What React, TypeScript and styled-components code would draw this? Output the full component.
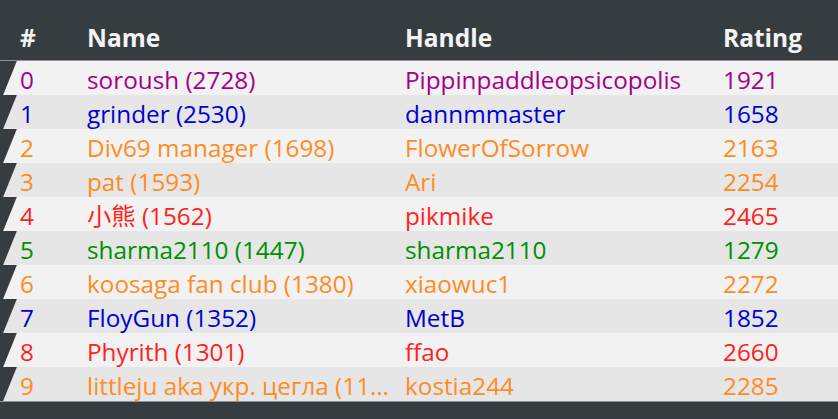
import React, { ReactElement } from "react";
import styled, { createGlobalStyle } from "styled-components";

const GlobalStyle = createGlobalStyle`
  html, body {
    margin: 0;
    padding: 0;
    background: #363d40;
  }
  body {
    font-family: "Open Sans", "Noto Sans", "Noto Sans CJK SC", sans-serif;
  }
`;

const colors: Record<string, string> = {
  purple: "#a3008a",
  blue: "#0000d0",
  orange: "#ff8c1f",
  red: "#ff1f1f",
  green: "#008f00",
};

interface Entry {
  name: string;
  handle: string;
  rating: number;
  color: string;
}

const entries: Entry[] = [
  { name: "soroush (2728)", handle: "Pippinpaddleopsicopolis", rating: 1921, color: "purple" },
  { name: "grinder (2530)", handle: "dannmmaster", rating: 1658, color: "blue" },
  { name: "Div69 manager (1698)", handle: "FlowerOfSorrow", rating: 2163, color: "orange" },
  { name: "pat (1593)", handle: "Ari", rating: 2254, color: "orange" },
  { name: "小熊 (1562)", handle: "pikmike", rating: 2465, color: "red" },
  { name: "sharma2110 (1447)", handle: "sharma2110", rating: 1279, color: "green" },
  { name: "koosaga fan club (1380)", handle: "xiaowuc1", rating: 2272, color: "orange" },
  { name: "FloyGun (1352)", handle: "MetB", rating: 1852, color: "blue" },
  { name: "Phyrith (1301)", handle: "ffao", rating: 2660, color: "red" },
  { name: "littleju aka укр. цегла (1185)", handle: "kostia244", rating: 2285, color: "orange" },
];

const Page = styled.div`
  width: 838px;
  height: 419px;
  overflow: hidden;
  background: #363d40;
`;

const Columns = styled.div`
  display: grid;
  grid-template-columns: 67px 318px 318px 1fr;
  padding-left: 20px;
  align-items: center;
`;

const HeaderRow = styled(Columns)`
  height: 61px;
  box-sizing: border-box;
  padding-top: 16px;
  color: #f4f4f4;
  font-weight: 700;
  font-size: 24.5px;
  border-bottom: 1px solid #8d9396;
`;

const Body = styled.div`
  border-bottom: 1px solid #8d9396;
  overflow: hidden;
`;

const Row = styled(Columns)<{ $alt: boolean; $tone: string }>`
  position: relative;
  height: 34px;
  font-size: 24.3px;
  color: ${(p) => p.$tone};
  z-index: 0;

  &::before {
    content: "";
    position: absolute;
    top: 0;
    bottom: 0;
    left: 10px;
    right: -30px;
    transform: skewX(-22deg);
    background: ${(p) => (p.$alt ? "#e6e6e6" : "#f2f2f2")};
    z-index: -1;
  }
`;

const Cell = styled.span`
  white-space: nowrap;
  overflow: hidden;
  text-overflow: ellipsis;
  padding-right: 16px;
  line-height: 34px;
`;

const RowCell = styled(Cell)`
  padding-top: 4px;
  line-height: 30px;
`;

export default function App(): ReactElement {
  return (
    <Page>
      <GlobalStyle />
      <HeaderRow>
        <Cell>#</Cell>
        <Cell>Name</Cell>
        <Cell>Handle</Cell>
        <Cell>Rating</Cell>
      </HeaderRow>
      <Body>
        {entries.map((e, i) => (
          <Row key={i} $alt={i % 2 === 1} $tone={colors[e.color]}>
            <RowCell>{i}</RowCell>
            <RowCell>{e.name}</RowCell>
            <RowCell>{e.handle}</RowCell>
            <RowCell>{e.rating}</RowCell>
          </Row>
        ))}
      </Body>
    </Page>
  );
}
